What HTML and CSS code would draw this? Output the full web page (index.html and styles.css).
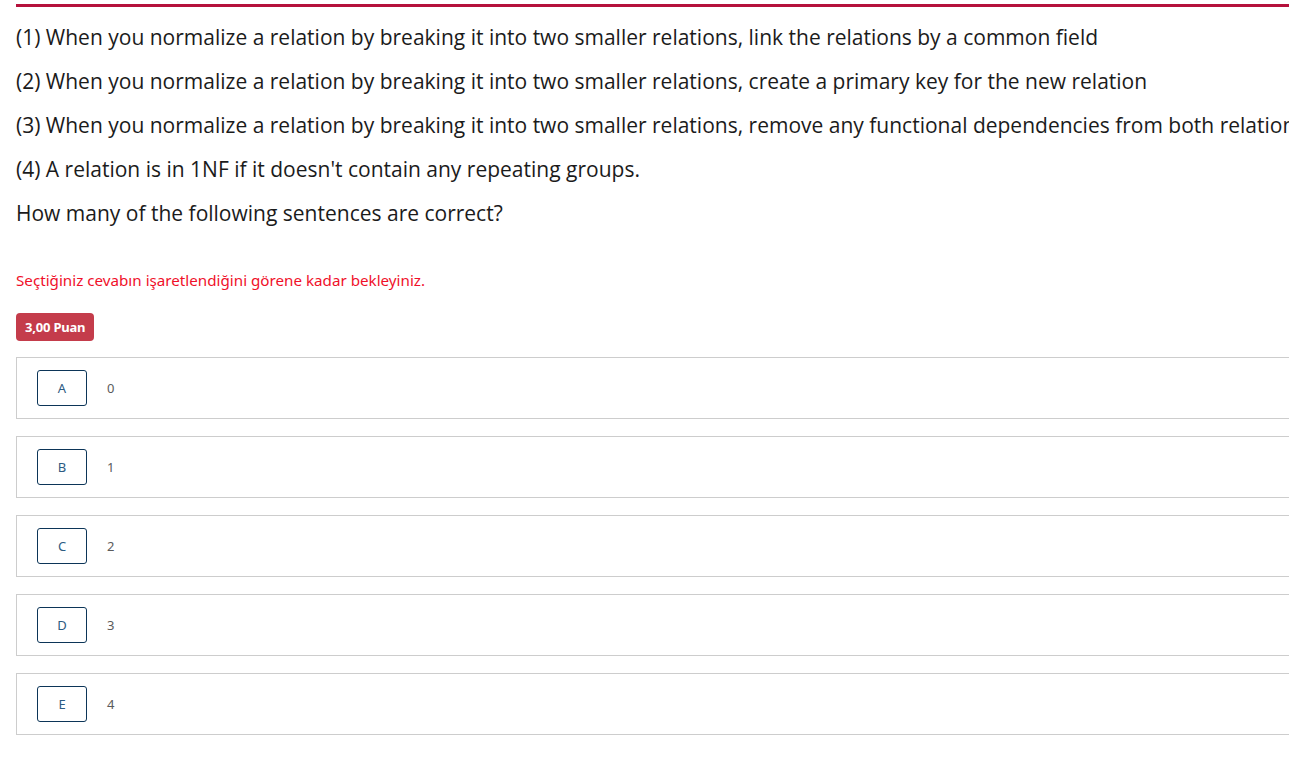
FILE: index.html
```html
<!DOCTYPE html>
<html lang="tr">
<head>
<meta charset="utf-8">
<title>Soru</title>
<link rel="stylesheet" href="styles.css">
</head>
<body>
<div class="page">
  <div class="topline"></div>
  <div class="question">
    <p>(1) When you normalize a relation by breaking it into two smaller relations, link the relations by a common field</p>
    <p>(2) When you normalize a relation by breaking it into two smaller relations, create a primary key for the new relation</p>
    <p>(3) When you normalize a relation by breaking it into two smaller relations, remove any functional dependencies from both relations</p>
    <p>(4) A relation is in 1NF if it doesn't contain any repeating groups.</p>
    <p>How many of the following sentences are correct?</p>
  </div>
  <div class="warning">Seçtiğiniz cevabın işaretlendiğini görene kadar bekleyiniz.</div>
  <div class="badge">3,00 Puan</div>
  <div class="options">
    <div class="option"><span class="letter">A</span><span class="answer">0</span></div>
    <div class="option"><span class="letter">B</span><span class="answer">1</span></div>
    <div class="option"><span class="letter">C</span><span class="answer">2</span></div>
    <div class="option"><span class="letter">D</span><span class="answer">3</span></div>
    <div class="option"><span class="letter">E</span><span class="answer">4</span></div>
  </div>
</div>
</body>
</html>
```

FILE: styles.css
```css
html, body {
  margin: 0;
  padding: 0;
  background: #fff;
  overflow: hidden;
}
.page {
  width: 1340px;
  padding-left: 16px;
  padding-top: 4px;
}
.topline {
  height: 3px;
  background: #b5113c;
}
.question {
  margin-top: 8px;
  font-family: "Open Sans", sans-serif;
  font-size: 21px;
  color: #1b1b1b;
}
.question p {
  margin: 0;
  line-height: 44px;
  white-space: nowrap;
}
.warning {
  margin-top: 35px;
  font-family: "Noto Sans", sans-serif;
  font-size: 15.2px;
  line-height: 20px;
  color: #f0102a;
}
.badge {
  display: flex;
  align-items: center;
  width: fit-content;
  margin-top: 23px;
  height: 28px;
  padding: 0 9px;
  border-radius: 4px;
  background: #c43c4b;
  color: #fff;
  font-family: "Noto Sans", sans-serif;
  font-weight: 700;
  font-size: 13px;
  letter-spacing: -0.2px;
}
.options {
  margin-top: 16px;
  display: flex;
  flex-direction: column;
  gap: 17px;
}
.option {
  display: flex;
  align-items: center;
  gap: 20px;
  height: 60px;
  padding-left: 20px;
  border: 1px solid #cdcdcd;
}
.letter {
  display: inline-flex;
  align-items: center;
  justify-content: center;
  box-sizing: border-box;
  width: 50px;
  height: 36px;
  border: 1px solid #0c3558;
  border-radius: 3px;
  font-family: "Noto Sans", sans-serif;
  font-size: 13px;
  color: #2d5b82;
}
.answer {
  font-family: "Noto Sans", sans-serif;
  font-size: 13px;
  color: #5b5b5b;
}
```
